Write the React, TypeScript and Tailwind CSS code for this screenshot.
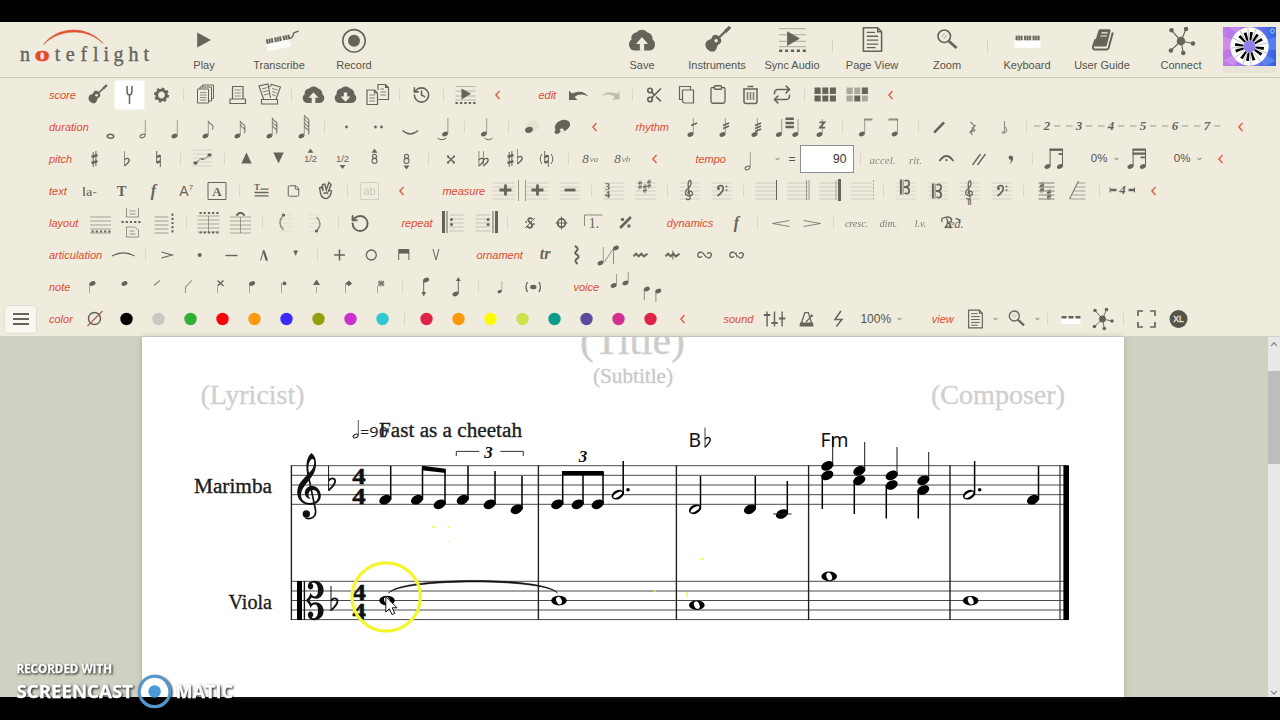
import type { ReactNode } from 'react';
import { Clipboard, History, Repeat, RotateCcw, Scissors, StickyNote } from 'lucide-react';

const INK = '#66645a';
const PAPER = '#efecde';

/* ---------- small drawing helpers, origin is the middle of the cell ---------- */

const Head = ({ x = 0, y = 0, open = false }: { x?: number; y?: number; open?: boolean }) => (
    <ellipse
        cx={x}
        cy={y}
        rx={open ? 2.6 : 3.1}
        ry={open ? 1.6 : 2.2}
        transform={`rotate(-24 ${x} ${y})`}
        fill={open ? 'none' : INK}
        stroke={open ? INK : 'none'}
        strokeWidth="1"
    />
);

const Line = ({ d, w = 1, o = 1 }: { d: string; w?: number; o?: number }) => (
    <path d={d} fill="none" stroke={INK} strokeWidth={w} opacity={o} />
);

const Fill = ({ d, o = 1 }: { d: string; o?: number }) => <path d={d} fill={INK} opacity={o} />;

const Note = ({ x = -1, y = 9, top = -7, flags = 0, open = false }: { x?: number; y?: number; top?: number; flags?: number; open?: boolean }) => (
    <>
        <Head x={x} y={y} open={open} />
        <Line d={`M${x + 2.8} ${y - 1}V${top}`} o={0.6} />
        {[...Array(flags)].map((_, i) => (
            <Line key={i} d={`M${x + 2.8} ${top + i * 3.6}q1 3 3.6 3.6q2 2 .4 5`} o={0.75} w={1.2} />
        ))}
    </>
);

const Staff = ({ x1 = -10, x2 = 10, y = -8, o = 0.3 }: { x1?: number; x2?: number; y?: number; o?: number }) => (
    <>
        {[0, 4, 8, 12, 16].map((d) => (
            <Line key={d} d={`M${x1} ${y + d}H${x2}`} o={o} />
        ))}
    </>
);

const Txt = ({ children, x = 0, y = 4, size = 11, serif = false, bold = false, italic = false, o = 1 }: {
    children: ReactNode; x?: number; y?: number; size?: number; serif?: boolean; bold?: boolean; italic?: boolean; o?: number;
}) => (
    <text
        x={x}
        y={y}
        fontSize={size}
        textAnchor="middle"
        fill={INK}
        opacity={o}
        fontWeight={bold ? 700 : 400}
        fontStyle={italic ? 'italic' : 'normal'}
        fontFamily={serif ? '"Liberation Serif", serif' : '"Liberation Sans", sans-serif'}
    >
        {children}
    </text>
);

const Sharp = ({ x = 0, y = 0 }: { x?: number; y?: number }) => (
    <g transform={`translate(${x} ${y})`}>
        <Line d="M-1.3 -7V8M1.4 -8V7" />
        <Line d="M-3 -2.2L3 -4M-3 4L3 2.2" w={2.4} />
    </g>
);

const Flat = ({ x = 0, y = 0 }: { x?: number; y?: number }) => (
    <g transform={`translate(${x} ${y})`}>
        <Line d="M-2 -8V7" o={0.7} />
        <Line d="M-2 1C0 -1.5 3 -1 2.6 1.6C2.4 3.6 0 5 -2 7" w={1.4} />
    </g>
);

const Natural = ({ x = 0 }: { x?: number }) => (
    <g transform={`translate(${x} 0)`}>
        <Line d="M-1.8 -8V4M1.8 -4V8" />
        <Line d="M-1.8 -2L1.8 -3.4M-1.8 3.6L1.8 2.2" w={2.3} />
    </g>
);

const Cloud = ({ down = false }: { down?: boolean }) => (
    <>
        <Fill d="M-6.6 8A4.9 4.9 0 0 1 -8.8 -.8A4.8 4.8 0 0 1 -4.4 -6.6A5.6 5 0 0 1 4.6 -6.4A5 5 0 0 1 8.8 -.8A4.9 4.9 0 0 1 6.6 8Z" />
        <path d={down ? 'M-1.7 -2.5H1.7V1.5H5L0 6.8L-5 1.5H-1.7Z' : 'M-1.8 8.2V2.8H-5L0 -2.8L5 2.8H1.8V8.2Z'} fill={PAPER} />
    </>
);

const Guitar = () => (
    <>
        <Fill d="M-8.6 1.5C-7.6 -1 -4.8 0 -4 -2.4C-3.4 -5 .4 -4.6 1.6 -2.4C3.4 -.8 3.2 2 1 2.8C-.8 3.6 .2 6 -2 7.8C-4.6 9.8 -10.6 5.6 -8.6 1.5Z" />
        <Line d="M0 -1L6.4 -7.2" w={1.7} />
        <Line d="M5.6 -6.4L9.4 -10" w={2.4} />
        <circle cx="-1" cy=".2" r="1.3" fill={PAPER} />
    </>
);

const Doc = ({ s = 1 }: { s?: number }) => (
    <g transform={`scale(${s})`}>
        <Line d="M-7 -9H4L7 -6V9H-7ZM4 -9V-6H7" w={1.2} />
        <Line d="M-4.4 -5.5H2M-4.4 -2.5H4.4M-4.4 .5H4.4M-4.4 3.5H4.4M-4.4 6.3H2.4" />
    </g>
);

const Magnifier = () => (
    <>
        <circle cx="-2.2" cy="-3" r="5" fill="none" stroke={INK} strokeWidth="1.3" />
        <Line d="M-4.5 -2.5L-1.8 -5.5M-2.5 -1L0 -4" w={0.7} o={0.6} />
        <Line d="M1.4 .8L7.6 6.4" w={2.2} />
    </>
);

const Sync = () => (
    <>
        <Line d="M-10 -8.5H10M-10 -4H10M-10 1H10M-10 5H10" o={0.4} />
        <Fill d="M-4 -6.6L5.5 -1.2L-4 4.4Z" />
        <path d="M-10 8H10" stroke={INK} strokeWidth="2" strokeDasharray="2.4 2" />
    </>
);

const Network = () => (
    <>
        <Line d="M0 0L-7.5 -8.5M0 0L4 -9.5M0 0L9.5 2M0 0L1.8 9.5M0 0L-8 7.5" w={0.9} />
        <circle r="3.4" fill={INK} />
        {[[-7.5, -8.5], [4, -9.5], [9.5, 2], [1.8, 9.5], [-8, 7.5]].map(([x, y]) => (
            <circle key={x} cx={x} cy={y} r="1.8" fill={INK} />
        ))}
    </>
);

const Treble = () => (
    <Line d="M-3.5 7.6Q-.2 10 .6 7L-1.4 -6Q-1.4 -10.6 1 -10.6Q3 -7 -1 -3Q-5 .4 -3.8 3.2Q-.8 6.6 3 3.6Q3.6 .2 .2 .2Q-2.4 .6 -1.2 3" w={1.3} />
);

const AltoClef = ({ y = 0 }: { y?: number }) => (
    <g transform={`translate(0 ${y})`}>
        <Line d="M-4.6 -7.5V7.5" w={2} />
        <Line d="M-2.4 -7.5V7.5" w={0.8} />
        <Line d="M-1 -6Q4 -8 3.6 -3Q3 0 -1.5 0Q3 0 3.6 3Q4 8 -1 6" w={1.8} />
    </g>
);

const BassClef = () => (
    <>
        <Line d="M-4 -3.4Q-2.6 -6.4 .6 -5.2Q4.4 -1 -4 5" w={1.6} />
        <circle cx="-3" cy="-2.6" r="1.5" fill={INK} />
        <circle cx="5" cy="-4.6" r=".9" fill={INK} />
        <circle cx="5" cy="-.8" r=".9" fill={INK} />
    </>
);

const Rhythm = ({ n }: { n: number }) => (
    <>
        <Note x={-2} y={7.4} top={-9} />
        {[...Array(n)].map((_, i) => (
            <Line key={i} d={`M-1.5 ${-1.5 + i * 3}L4.6 ${-4 + i * 3}`} w={1.4} />
        ))}
    </>
);

const Mordent = () => <Line d="M-7 1.4L-4.4 -1.4L-1.8 1.4L.8 -1.4L3.4 1.4L7 -1.2" w={2} />;

const Turn = () => <Line d="M-2.6 1.2C-5 3.6 -7.4 2 -6.6 -.6C-5.6 -4.6 -1.8 -3 0 0C1.8 3 5.6 4.6 6.6 .6C7.4 -2 5 -3.6 2.6 -1.2" w={1.4} />;

const Down = ({ children }: { children: ReactNode }) => (
    <>
        <Line d="M-3 -4V6" o={0.55} />
        {children}
    </>
);

const Tuplet = ({ n }: { n: number }) => (
    <>
        <Line d="M-14.5 -1H-8M5.5 -1H12" o={0.6} />
        <Txt serif bold italic x={-1.6} y={3} size={13}>{n}</Txt>
    </>
);

const Dot = ({ fill }: { fill: string }) => <circle r="6.2" fill={fill} />;

const Octave = ({ down = false }: { down?: boolean }) => (
    <>
        <circle cy="-2.6" r="2" fill="none" stroke={INK} strokeWidth="1.1" />
        <circle cy="1.9" r="2.5" fill="none" stroke={INK} strokeWidth="1.1" />
        <Fill d={down ? 'M-3 6.5H3L0 10.5Z' : 'M-3 -6.2H3L0 -10.2Z'} />
    </>
);

/* ---------- toolbar icons ---------- */

const icons: Record<string, ReactNode> = {
    '<': <path d="M2 -4L-1.6 0L2 4" fill="none" stroke="#e8604c" strokeWidth="1.5" />,
    guitar: <Guitar />,
    fork: (
        <>
            <rect x="-15" y="-14.5" width="30" height="29" rx="3" fill="#fff" />
            <Line d="M-2.4 -9V-3.4Q-2.4 0 0 0Q2.4 0 2.4 -3.4V-9M0 0V9" w={1.5} />
        </>
    ),
    gear: (
        <>
            <circle r="4.8" fill="none" stroke={INK} strokeWidth="2.8" />
            <circle r="6.6" fill="none" stroke={INK} strokeWidth="1.9" strokeDasharray="2.7 2.48" />
        </>
    ),
    pages: (
        <>
            <Line d="M-8 -6H3V8H-8ZM-5.5 -6V-8H6V6H3M-3 -8V-10H8V3.5H6" />
            <Line d="M-5.5 -2.5H1M-5.5 0H1M-5.5 2.5H1M-5.5 5H1" o={0.7} />
        </>
    ),
    print: (
        <>
            <Line d="M-5 4V-8.5H5.5V4M-7.5 4H8V8.5H-7.5Z" w={1.2} />
            <Line d="M-3 -5H3.4M-3 -2H3.4M-3 1H3.4" o={0.7} />
        </>
    ),
    printAll: (
        <>
            <Line d="M-8 4.5H8V9H-8ZM-6 4L-10.5 -9L-1.5 -11L1 3M0 -8L2 -10.5L11 -8L6.5 4" w={1.1} />
            <Line d="M-7.5 -6L-2 -7.5M-6.8 -3L-1 -4.5M-5.6 0L0 -1.5M2.5 -6.5L8 -5M2.5 -3.5L7 -2M2.5 -.5L6 .8" o={0.8} />
        </>
    ),
    cloudUp: <Cloud />,
    cloudDown: <Cloud down />,
    duplicate: (
        <>
            <Line d="M-10.5 -5H-3L0 -2V9.5H-10.5ZM-3 -5V-2H0M1 4.5H11V-7.5L8 -10.5H.5V-5M8 -10.5V-7.5H11" w={1.2} />
            <Line d="M-8 0H-2.5M-8 3H-2.5M-8 6H-2.5M3 -6H6.5M3 -3H8.5M3 0H8.5" o={0.8} />
        </>
    ),
    history: <History x={-9.5} y={-9.5} width={19} height={19} color={INK} strokeWidth={2} />,
    sync: <Sync />,
    undo: <Fill d="M-9.5 -4.5V5H-1L-4 2Q2 -2.6 10 1.5Q4 -6 -6.5 -1.6Z" />,
    redo: <Fill d="M9 -3.8V4.4H1.6L4.4 2Q-2 -2.6 -9 1.5Q-4 -5.4 6.5 -1.2Z" o={0.35} />,
    cut: <Scissors x={-9} y={-9} width={18} height={18} color={INK} strokeWidth={2.3} />,
    copy: <Line d="M-4 -5H7V8H-1.5Q-4 8 -4 5.5ZM-4 4.5H-7V-8.5H4V-5" w={1.2} />,
    paste: <Clipboard x={-11} y={-11} width={21} height={21} color={INK} strokeWidth={1.5} />,
    trash: (
        <>
            <Line d="M-7.5 -6H7.5M-3 -8.5H3M-6.5 -6V6.5Q-6.5 8.5 -4.5 8.5H4.5Q6.5 8.5 6.5 6.5V-6" w={1.5} />
            <Line d="M-3 -3V5M0 -3V5M3 -3V5" w={1.6} o={0.8} />
        </>
    ),
    loop: (
        <>
            <Repeat x={-11} y={-10.5} width={21} height={20} color={INK} strokeWidth={1.9} />
        </>
    ),
    grid: <Fill d="M-12 -7.5H-5.8V-1H-12ZM-4.2 -7.5H1.8V-1H-4.2ZM3.4 -7.5H9.4V-1H3.4ZM-12 .5H-5.8V6.5H-12ZM-4.2 .5H1.8V6.5H-4.2ZM3.4 .5H9.4V6.5H3.4Z" />,
    grid2: (
        <>
            <Fill d="M-12 -7.5H-5.8V-1H-12ZM-4.2 -7.5H1.8V-1H-4.2ZM-12 .5H-5.8V6.5H-12ZM3.4 .5H9.4V6.5H3.4Z" o={0.5} />
            <Fill d="M3.4 -7.5H9.4V-1H3.4ZM-4.2 .5H1.8V6.5H-4.2Z" />
        </>
    ),

    whole: <ellipse cy="9.3" rx="3.2" ry="2" fill="none" stroke={INK} strokeWidth="1.5" />,
    half: <Note x={0} open />,
    quarter: <Note x={0} />,
    eighth: <Note x={-1} top={-6} flags={1} />,
    n16: <Note x={-1} top={-6} flags={2} />,
    n32: <Note x={-1} top={-9} flags={3} />,
    n64: <Note x={-1} top={-12} flags={4} />,
    dot: <circle cx="0" r="1.4" fill={INK} />,
    dots: (
        <>
            <circle cx="-3" r="1.4" fill={INK} />
            <circle cx="3" r="1.4" fill={INK} />
        </>
    ),
    smile: <Line d="M-8 3.5Q0 10.5 7.5 3.5" w={1.3} />,
    tieL: (
        <>
            <Note x={2.6} y={7} top={-9} />
            <Line d="M-5 11Q-1 14.5 4 11" />
        </>
    ),
    tieR: (
        <>
            <Note x={-2.6} y={7} top={-9} />
            <Line d="M-2 11Q2 14.5 6 11" />
        </>
    ),
    fade: (
        <>
            <ellipse cx="2" cy="-1" rx="6.5" ry="5.5" fill={INK} opacity=".07" />
            <ellipse cx="-2.2" cy="2.4" rx="4" ry="2.9" transform="rotate(-15)" fill={INK} />
        </>
    ),
    bigHead: (
        <>
            <ellipse cx=".4" cy="-1" rx="8" ry="5.6" transform="rotate(-24)" fill={INK} />
            <ellipse cx="-3" cy="3" rx="3" ry="2.1" transform="rotate(-24)" fill={PAPER} />
            <Head x={-5} y={4.6} />
        </>
    ),
    r1: <Rhythm n={1} />,
    r2: <Rhythm n={2} />,
    r3: <Rhythm n={3} />,
    rBeam: (
        <>
            <Note x={-9.6} y={7.4} top={-8} />
            <Note x={6.8} y={7.4} top={-8} />
            <Line d="M-3 -8.3H5.4M-3 -4H5.4M-3 0H5.4" w={2.4} />
        </>
    ),
    rZ: (
        <>
            <Note x={-1} y={7.4} top={-8} />
            <Line d="M-1 -4.6H4L-.6 .6H4.6" w={1.7} />
        </>
    ),
    beamR: (
        <>
            <Note x={-2.6} y={7} top={-8} />
            <Line d="M0 -7.5H8" w={2} o={0.7} />
        </>
    ),
    beamL: (
        <>
            <Note x={-1.8} y={7} top={-8} />
            <Line d="M1.4 -7.5H-8" w={2} o={0.7} />
        </>
    ),
    slash: <Line d="M-6.4 5.6L3.6 -4.6" w={2.6} />,
    rest: <Line d="M-2 -5Q4 0 0 1Q4 4 1 4Q-3 4 0 8M3 -2L-3 6" w={1.3} o={0.75} />,
    grace: <Line d="M0 -6V6Q4 5 1 0M0 6Q-4 7 -1 4" w={1.1} o={0.7} />,
    t2: <Tuplet n={2} />,
    t3: <Tuplet n={3} />,
    t4: <Tuplet n={4} />,
    t5: <Tuplet n={5} />,
    t6: <Tuplet n={6} />,
    t7: <Tuplet n={7} />,

    sharp: <Sharp />,
    flat: <Flat />,
    natural: <Natural />,
    contour: (
        <>
            <Staff y={-9} o={0.18} />
            <Line d="M-7 4L-2 0H2L7 -4" w={0.8} />
            <ellipse cx="-7" cy="4" rx="2.2" ry="1.7" fill={INK} />
            <circle cx="0" cy="0" r="1.1" fill={INK} />
            <ellipse cx="7" cy="-4" rx="2.2" ry="1.7" fill={INK} />
        </>
    ),
    up: <Fill d="M0 -6.4L5.2 4.4H-5.2Z" />,
    down: <Fill d="M0 4.4L5.2 -6.4H-5.2Z" />,
    halfUp: (
        <>
            <Txt y={3} size={9.5}>1/2</Txt>
            <Fill d="M-3 -6.2H3L0 -10.2Z" />
        </>
    ),
    halfDown: (
        <>
            <Txt y={3} size={9.5}>1/2</Txt>
            <Fill d="M-3 6H3L0 10Z" />
        </>
    ),
    octUp: <Octave />,
    octDown: <Octave down />,
    dblSharp: (
        <>
            <Line d="M-3 -3L4 4M4 -3L-3 4" w={1.4} />
            <path d="M-3.4 -3.4h2v2h-2zM2.4 -3.4h2v2h-2zM-3.4 2.4h2v2h-2zM2.4 2.4h2v2h-2z" fill={INK} />
        </>
    ),
    dblFlat: (
        <>
            <Flat x={-1.6} />
            <Flat x={3} />
        </>
    ),
    sharpFlat: (
        <>
            <Sharp x={-4} />
            <Flat x={5} y={-2} />
        </>
    ),
    parNat: (
        <>
            <Natural />
            <Line d="M-4.6 -5Q-8 0 -4.6 5M4.6 -5Q8 0 4.6 5" />
        </>
    ),
    va: (
        <>
            <Txt serif italic x={-5} size={13}>8</Txt>
            <Txt serif italic x={3.4} y={2.6} size={9} o={0.8}>va</Txt>
        </>
    ),
    vb: (
        <>
            <Txt serif italic x={-5} size={13}>8</Txt>
            <Txt serif italic x={3.4} y={2.6} size={9} o={0.8}>vb</Txt>
        </>
    ),
    accel: <Txt serif italic y={5} size={11} o={0.75}>accel.</Txt>,
    rit: <Txt serif italic x={1} y={5} size={11} o={0.75}>rit.</Txt>,
    fermata: (
        <>
            <Line d="M-7 2Q0 -8 6.8 2" w={1.9} />
            <circle cx="0" cy="1.2" r="1.1" fill={INK} />
        </>
    ),
    caesura: <Line d="M-6 6L2 -5M-1 6L7 -5" w={1.3} />,
    comma: <Fill d="M-2 -1.6A2.3 2.3 0 1 1 2.6 -.4Q2.4 3.6 -1.4 5Q1.2 2.4 .6 .8Q-2 1 -2 -1.6Z" />,
    swing8: (
        <>
            <Head x={-7} y={7.4} />
            <Head x={5.4} y={7.4} />
            <Line d="M-4.4 7V-9.5M8 7V-9.5" />
            <Line d="M-5 -9.3H8.5" w={2.4} />
            <Line d="M4 -5H8.5" w={1.8} />
        </>
    ),
    swing16: (
        <>
            <Head x={-7} y={7.4} />
            <Head x={5.4} y={7.4} />
            <Line d="M-4.4 7V-9.5M8 7V-9.5" />
            <Line d="M-5 -9.3H8.5M-5 -5.4H8.5" w={2.2} />
            <Line d="M3 -1.6H8.5" w={1.8} />
        </>
    ),

    lyric: <Txt serif bold y={4.5} size={13} o={0.8}>la-</Txt>,
    bigT: <Txt serif bold y={4.5} size={14.5}>T</Txt>,
    forte: <Txt serif bold italic y={4.5} size={16}>f</Txt>,
    chord: (
        <>
            <Txt x={-1.6} y={5} size={14}>A</Txt>
            <Txt x={5.4} y={-1} size={8}>7</Txt>
        </>
    ),
    rehearsal: (
        <>
            <Line d="M-9.5 -8.5H8.5V8.5H-9.5Z" />
            <Txt serif bold x={-.5} y={4.8} size={13}>A</Txt>
        </>
    ),
    textLines: (
        <>
            <Txt serif bold x={-4.6} y={-1} size={9}>T</Txt>
            <Line d="M-1 -1.8H7M-7 1.5H7M-7 4.8H7" w={1.3} />
        </>
    ),
    sticky: <StickyNote x={-7} y={-7} width={14} height={14} color={INK} strokeWidth={1.7} />,
    hand: <Line d="M-5 2L-6 -3L-4 -4L-2.4 0L-3 -6.4L-.6 -7L.8 -1L3.4 -8.4L5.6 -6.4L3 0Q7 -2 5.6 2Q4 7.6 0 7.6Q-4 7 -5 2ZM-2 2.6Q1 .6 2.6 3" w={1.4} />,
    ab: (
        <>
            <Line d="M-9 -8.5H9V8.5H-9Z" o={0.2} />
            <Txt y={4} size={11} o={0.28}>ab</Txt>
        </>
    ),
    addBefore: (
        <>
            <Staff x1={-13} x2={9} o={0.2} />
            <Line d="M-6 -1H6M0 -6.5V4.5" w={2.8} />
            <Line d="M13 -11V10" o={0.6} />
        </>
    ),
    addAfter: (
        <>
            <Staff x1={-11} x2={11} o={0.2} />
            <Line d="M-6 -1H6M0 -6.5V4.5" w={2.8} />
            <Line d="M-12 -11V10" o={0.6} />
        </>
    ),
    minus: (
        <>
            <Staff o={0.2} />
            <Line d="M-5 -1H6" w={2.8} />
        </>
    ),
    timeSig: (
        <>
            <Staff o={0.22} />
            <Txt serif bold x={-6} y={-1} size={10}>3</Txt>
            <Txt serif bold x={-6} y={7} size={10}>4</Txt>
        </>
    ),
    keySig: (
        <>
            <Staff o={0.22} />
            <g transform="scale(.6)">
                <Sharp x={-9} y={-10} />
                <Sharp x={-1} y={-4} />
                <Sharp x={6} y={-12} />
            </g>
        </>
    ),
    treble: (
        <>
            <Staff o={0.2} />
            <Treble />
        </>
    ),
    bass: (
        <>
            <Staff o={0.2} />
            <BassClef />
        </>
    ),
    bar1: (
        <>
            <Staff x1={-10} x2={11} o={0.25} />
            <Line d="M11 -11V9" />
        </>
    ),
    bar2: (
        <>
            <Staff x1={-10} x2={11} o={0.25} />
            <Line d="M9 -11V9M11.6 -11V9" o={0.6} />
        </>
    ),
    bar3: (
        <>
            <Staff x1={-10} x2={11} o={0.25} />
            <Line d="M6.5 -11V9" o={0.5} />
            <Line d="M10 -12V10" w={3} />
        </>
    ),
    bar4: (
        <>
            <Staff x1={-10} x2={11} o={0.22} />
            <path d="M12 -11V9" stroke={INK} strokeDasharray="2 1.5" opacity=".5" />
        </>
    ),
    alto: (
        <>
            <Staff o={0.15} />
            <AltoClef y={-4} />
        </>
    ),
    tenor: (
        <>
            <Staff o={0.15} />
            <AltoClef />
        </>
    ),
    treble8: (
        <>
            <Staff o={0.2} />
            <g transform="scale(.95)"><Treble /></g>
            <Txt serif bold y={13.5} size={8}>8</Txt>
        </>
    ),
    percussion: (
        <>
            <Staff o={0.2} />
            <BassClef />
        </>
    ),
    transpose: (
        <>
            <Staff x1={-7} x2={9} o={0.8} />
            <g transform="scale(.7)">
                <Sharp x={-5} y={-5} />
                <Sharp x={5} y={5} />
            </g>
        </>
    ),
    slashStaff: (
        <>
            <Line d="M0 -8H8M-1.6 -4H8M-3.6 0H8M-5.4 4H8M-7.4 8H8" o={0.55} />
            <Line d="M-8 8L1 -10" />
        </>
    ),
    multiRest: (
        <>
            <Line d="M-11 -1H-5M7 -1H13" w={2.6} />
            <Line d="M-11.5 -3.5V1.5M13 -3.5V1.5" />
            <Txt serif bold italic x={1} y={3.4} size={13}>4</Txt>
        </>
    ),

    sysBreak: (
        <>
            <Staff x1={-10.5} x2={10.5} y={-6} o={0.55} />
            <path d="M-9 8.5H10" stroke={INK} strokeWidth="2" strokeDasharray="2.2 2" />
        </>
    ),
    pageBreak: (
        <>
            <path d="M-11 -1H9" stroke={INK} strokeWidth="1.8" strokeDasharray="2.2 2" />
            <Line d="M-6 -15V-6H6V-15M-3 -12H3M-3 -9H3M-6 14V4H2L6 7V14ZM-3 8H2M-3 11H3" o={0.65} />
        </>
    ),
    marginBreak: (
        <>
            <Staff x1={-10} x2={4} y={-6} o={0.6} />
            <path d="M8 -9.5V10" stroke={INK} strokeWidth="2" strokeDasharray="2.2 2" />
        </>
    ),
    keep: (
        <>
            <Staff x1={-11} x2={11} y={-7} o={0.5} />
            <path d="M-9 -10H11M-9 9.5H11" stroke={INK} strokeWidth="2" strokeDasharray="2.2 2" />
            <Line d="M0 -7V9" o={0.6} />
        </>
    ),
    lock: (
        <>
            <Staff x1={-10.5} x2={10.5} y={-6} o={0.5} />
            <Line d="M-4 -7.4Q0 -13 4 -7.4" w={2} />
            <Line d="M0 -6V10" o={0.6} />
        </>
    ),
    slurL: (
        <>
            <Staff x1={-6} x2={8} o={0.1} />
            <Line d="M-1 -8Q-8 0 -1 7" w={1.4} o={0.7} />
            <circle cx="-1" cy="-8" r="1.6" fill={INK} />
        </>
    ),
    slurR: (
        <>
            <Staff x1={-8} x2={4} o={0.1} />
            <Line d="M0 -6Q7 1 0 8" w={1.4} o={0.7} />
            <circle cx="0" cy="8" r="1.6" fill={INK} />
        </>
    ),
    reset: <RotateCcw x={-10.4} y={-9.5} width={20} height={20} color={INK} strokeWidth={2.3} />,
    repStart: (
        <>
            <Staff x1={-4} x2={10} o={0.3} />
            <Line d="M-10 -12V10" w={3} />
            <Line d="M-6.5 -12V10" />
            <circle cx="-2" cy="-3.4" r="1.5" fill={INK} />
            <circle cx="-2" cy="1.4" r="1.5" fill={INK} />
        </>
    ),
    repEnd: (
        <>
            <Staff x1={-10} x2={5} o={0.3} />
            <Line d="M11 -12V10" w={3} />
            <Line d="M7.5 -12V10" />
            <circle cx="2.6" cy="-3.4" r="1.5" fill={INK} />
            <circle cx="2.6" cy="1.4" r="1.5" fill={INK} />
        </>
    ),
    segno: (
        <>
            <Line d="M3 -4Q0 -6 -1.4 -3.4Q-1 -1 1.4 0Q3.6 2 2 4.2Q0 5.6 -2.4 3.6" w={1.9} />
            <Line d="M-4.4 5L5.4 -5" />
            <circle cx="-3.4" cy="-1" r=".9" fill={INK} />
            <circle cx="4.4" cy="1" r=".9" fill={INK} />
        </>
    ),
    coda: (
        <>
            <ellipse cx="0" cy="0" rx="3.8" ry="4.2" fill="none" stroke={INK} strokeWidth="1.9" />
            <Line d="M0 -6.5V6.5M-6 0H6" />
        </>
    ),
    ending: (
        <>
            <Line d="M-9 3V-8H9" o={0.7} />
            <Txt serif x={.6} y={5} size={14}>1.</Txt>
        </>
    ),
    simile: (
        <>
            <Line d="M-5.4 5L5.4 -6" w={2.6} />
            <circle cx="-3" cy="-3.6" r="1.7" fill={INK} />
            <circle cx="3.4" cy="3" r="1.7" fill={INK} />
        </>
    ),
    cresc: <Line d="M9 -2.5L-8 .5L9 3.5" o={0.75} />,
    decresc: <Line d="M-9 -2.5L8 .5L-9 3.5" o={0.75} />,
    crescT: <Txt serif italic size={10} o={0.85}>cresc.</Txt>,
    dimT: <Txt serif italic size={10} o={0.85}>dim.</Txt>,
    lvT: <Txt serif italic size={10} o={0.85}>l.v.</Txt>,
    ped: (
        <>
            <Line d="M-10.4 -1Q-12 -5 -8 -5.4Q-3 -7 -1 -4Q-.4 -.6 -4.4 -.4Q-2.4 1.6 -1 5M-6 -4.6Q-3 0 -7.6 4.8Q-5 3 -2 5" w={1.4} />
            <Txt serif italic x={3.6} y={5.2} size={12.5}>ed.</Txt>
            <Line d="M3 -4.4Q7 -4.6 7.4 0" w={1.4} />
        </>
    ),

    slur: <Line d="M-11.5 1Q0 -5.4 11 1" w={1.3} />,
    accent: <Line d="M-6 -3L4.6 0L-6 3" w={1.2} />,
    stacc: <circle cx=".2" r="2" fill={INK} />,
    tenuto: <Line d="M-6 .5H6" w={1.4} />,
    marcato: (
        <>
            <Line d="M-3 5.6L.2 -5L3.4 5.6" />
            <Line d="M.2 -4L3.4 5.6" w={2.2} />
        </>
    ),
    wedge: <Fill d="M-2.2 -4.4H2.4L.2 1Z" />,
    plus: <Line d="M-5.4 0H5.4M0 -5.4V5.4" w={1.6} />,
    openO: <circle cx="-.2" r="5" fill="none" stroke={INK} strokeWidth="1.3" />,
    downBow: (
        <>
            <Fill d="M-5.2 -6H5.8V-1.4H-5.2Z" />
            <Line d="M-4.8 -2V5M5.4 -2V5" />
        </>
    ),
    upBow: <Line d="M-2.6 -6L.6 5L3.4 -6" />,
    trill: <Txt serif bold italic x={0.6} y={4.4} size={16}>tr</Txt>,
    arp: <Line d="M-1.6 -9Q3 -6.6 0 -4Q-3 -1.6 1 0Q3.4 2.4 0 4Q-2.4 6 1 9" w={2} />,
    gliss: (
        <>
            <Note x={-8} y={8} top={-8} />
            <Line d="M-4 7L4.5 -6M5 -6.6V9" o={0.7} />
            <Head x={7.4} y={-7} />
        </>
    ),
    mordent: <Mordent />,
    lowMordent: (
        <>
            <Mordent />
            <Line d="M.4 -4.4V4.4" />
        </>
    ),
    turn: <Turn />,
    invTurn: (
        <>
            <Turn />
            <Line d="M0 -3V3" o={0.4} />
        </>
    ),

    h1: <Down><Head x={0} y={-3.6} /></Down>,
    h2: <Head x={0} y={-3.6} />,
    h3: <Line d="M-2.6 -1.4L3.4 -6.6" w={1.3} o={0.7} />,
    h4: <Line d="M-3 6V0L3.4 -6.6" w={1.2} o={0.6} />,
    h5: (
        <>
            <Line d="M-3 0V6" o={0.55} />
            <Line d="M-3 -6.6L3 -1M3 -6.6L-3 -1" w={1.4} />
        </>
    ),
    h6: <Down><Head x={-.4} y={-3.6} /></Down>,
    h7: <Down><circle cx="0" cy="-3.6" r="1.9" fill={INK} /></Down>,
    h8: (
        <>
            <Line d="M0 0V6" o={0.55} />
            <Fill d="M0 -7.6L3.6 -2H-3.6Z" />
        </>
    ),
    h9: <Down><Fill d="M-3 -3.6L.4 -6.6L3.6 -3.6L.4 -.8Z" /></Down>,
    h10: (
        <>
            <Line d="M-3 -1V6" o={0.55} />
            <circle cx=".6" cy="-3.6" r="3.2" fill={INK} opacity=".45" />
            <Line d="M-2 -5.6L3.4 -1.6M3.4 -5.6L-2 -1.6" w={1.1} />
        </>
    ),
    stemDown: (
        <>
            <Head x={1.6} y={-7} />
            <Line d="M-.8 -7V7" />
            <Fill d="M-3 5H1.6L-.8 9.4Z" />
        </>
    ),
    stemUp: (
        <>
            <Head x={-1} y={7} />
            <Line d="M1.8 7V-7" />
            <Fill d="M-.6 -6H4.2L1.8 -10Z" />
        </>
    ),
    cue: <g transform="scale(.75)"><Note x={-1} y={6} top={-8} /></g>,
    parHead: (
        <>
            <ellipse cx=".8" cy="0" rx="3.2" ry="2.3" fill={INK} />
            <Line d="M-5 -5Q-8 0 -5 5M6.4 -5Q9.4 0 6.4 5" w={1.3} />
        </>
    ),
    voice1: (
        <>
            <Note x={-6.8} y={-1.6} top={-13} />
            <Note x={5} y={-4} top={-15} />
        </>
    ),
    voice2: (
        <>
            <Head x={-5.6} y={2} />
            <Head x={5.8} y={4} />
            <Line d="M-8.2 2V13M3.4 4V15" o={0.7} />
        </>
    ),

    noColor: (
        <>
            <circle cy="-.5" r="6" fill="none" stroke={INK} strokeWidth="1.5" />
            <path d="M-7 7L8 -8" stroke="#a8605a" strokeWidth="1.2" />
        </>
    ),
    black: <Dot fill="#000" />,
    silver: <Dot fill="#c8c8c4" />,
    green: <Dot fill="#2eb135" />,
    red: <Dot fill="#fb0207" />,
    orange: <Dot fill="#fd9a12" />,
    blue: <Dot fill="#3a2bfb" />,
    olive: <Dot fill="#92a00c" />,
    magenta: <Dot fill="#cc2fd0" />,
    cyan: <Dot fill="#31c7d0" />,
    crimson: <Dot fill="#dd2449" />,
    amber: <Dot fill="#fb990a" />,
    yellow: <Dot fill="#fdfb03" />,
    lime: <Dot fill="#cfe04e" />,
    teal: <Dot fill="#0e9b8c" />,
    violet: <Dot fill="#5d4a9c" />,
    pink: <Dot fill="#d1318f" />,
    mixer: (
        <>
            <Line d="M-7.4 -7.5V7.5M0 -7.5V7.5M7.6 -7.5V7.5" w={1.4} />
            <Line d="M-10.6 -4H-4.2M-3.2 4H3.2M4.4 -.4H10.8" w={2} />
        </>
    ),
    metronome: (
        <>
            <Line d="M-5.4 5L-1.6 -6.4H1.8L5.4 5Z" w={1.3} />
            <Line d="M-.5 3L5.6 -3.6" w={1.2} />
            <circle cx="5.2" cy="-3.2" r="1.3" fill={INK} />
            <Fill d="M-6.4 3.4H6.4L7 7.4H-7Z" />
        </>
    ),
    bolt: <Line d="M2.4 -8L-3.6 .6H3.4L-2.2 7.4" w={1.5} />,
    doc: <Doc s={0.98} />,
    zoom: <Magnifier />,
    keys: (
        <>
            <rect x="-9" y="-1" width="19" height="6" fill="#fff" />
            <path d="M-9 -1.8H10" stroke={INK} strokeWidth="2.6" strokeDasharray="5 2" />
        </>
    ),
    network: <Network />,
    full: <Line d="M-8.5 -3V-8H-3.5M3.5 -8H8.5V-3M8.5 3V8H3.5M-3.5 8H-8.5V3" w={1.7} />,
    xl: (
        <>
            <circle r="9" fill="#55534a" />
            <text x="0" y="3" textAnchor="middle" fontSize="8.6" fill={PAPER} stroke={PAPER} strokeWidth=".3" fontFamily='"Liberation Sans", sans-serif'>XL</text>
        </>
    ),
};

/* ---------- toolbar rows ---------- */

type Group = { label: string; width: string; items: string };

const rows: Group[][] = [
    [
        { label: 'score', width: 'w-[32px]', items: 'guitar fork gear | pages print printAll | cloudUp cloudDown duplicate | history | sync <' },
        { label: 'edit', width: 'w-[24px]', items: 'undo redo | cut copy paste trash loop | grid grid2 <' },
    ],
    [
        { label: 'duration', width: 'w-[45px]', items: 'whole half quarter eighth n16 n32 n64 | dot dots smile tieL | tieR | fade bigHead <' },
        { label: 'rhythm', width: 'w-[41px]', items: 'r1 r2 r3 rBeam rZ | beamR beamL | slash rest grace | t2 t3 t4 t5 t6 t7 <' },
    ],
    [
        { label: 'pitch', width: 'w-[29px]', items: 'sharp flat natural | contour | up down halfUp halfDown octUp octDown | dblSharp dblFlat sharpFlat parNat | va vb <' },
        { label: 'tempo', width: 'w-[36px]', items: 'half #tempo | accel rit fermata caesura comma | swing8 #swing swing16 #swing <' },
    ],
    [
        { label: 'text', width: 'w-[24px]', items: 'lyric bigT forte chord rehearsal | textLines sticky hand | ab <' },
        { label: 'measure', width: 'w-[47px]', items: 'addBefore addAfter minus | timeSig keySig | treble bass | bar1 bar2 bar3 bar4 | alto tenor treble8 percussion | transpose slashStaff | multiRest <' },
    ],
    [
        { label: 'layout', width: 'w-[35px]', items: 'sysBreak pageBreak marginBreak | keep lock | slurL slurR | reset' },
        { label: 'repeat', width: 'w-[36px]', items: 'repStart repEnd | segno coda ending simile' },
        { label: 'dynamics', width: 'w-[53px]', items: 'forte | cresc decresc | crescT dimT lvT ped' },
    ],
    [
        { label: 'articulation', width: 'w-[58px]', items: 'slur | accent stacc tenuto marcato wedge | plus openO downBow upBow' },
        { label: 'ornament', width: 'w-[52px]', items: 'trill arp gliss mordent lowMordent turn invTurn' },
    ],
    [
        { label: 'note', width: 'w-[27px]', items: 'h1 h2 h3 h4 h5 h6 h7 h8 h9 h10 | stemDown stemUp | cue parHead' },
        { label: 'voice', width: 'w-[31px]', items: 'voice1 voice2' },
    ],
    [
        { label: 'color', width: 'w-[29px]', items: 'noColor black silver green red orange blue olive magenta cyan | crimson amber yellow lime teal violet pink crimson <' },
        { label: 'sound', width: 'w-[35px]', items: 'mixer metronome bolt #volume' },
        { label: 'view', width: 'w-[27px]', items: 'doc #caret zoom #caret | keys network | full xl' },
    ],
];

function Caret() {
    return (
        <svg width="5" height="4" viewBox="0 0 6 4" className="shrink-0">
            <path d="M.8 .8L3 2.8L5.2 .8" fill="none" stroke={INK} strokeWidth="1.3" opacity=".6" />
        </svg>
    );
}

function Item({ name }: { name: string }) {
    switch (name) {
        case '|':
            return (
                <div className="flex w-3 shrink-0 justify-center">
                    <div className="h-3 w-px bg-[#dad7c8]" />
                </div>
            );
        case '#caret':
            return (
                <div className="flex w-[9.5px] shrink-0 items-center justify-center">
                    <Caret />
                </div>
            );
        case '#tempo':
            return (
                <div className="flex w-[91px] shrink-0 items-center text-[12px] text-[#55534a]">
                    <div className="flex w-[37px] items-center justify-end gap-[8px] pr-[5px]">
                        <Caret />
                        <span>=</span>
                    </div>
                    <div className="flex h-[28px] w-[54px] items-center justify-end border border-[#8b8f92] bg-white pr-[7px] text-[#333]">
                        90
                    </div>
                </div>
            );
        case '#swing':
            return (
                <div className="flex w-[51px] shrink-0 items-center justify-end gap-[7px] pr-[2px] text-[11.5px] leading-none text-[#55534a]">
                    <span>0%</span>
                    <Caret />
                </div>
            );
        case '#volume':
            return (
                <div className="flex w-[52px] shrink-0 items-center justify-between pl-[6px] pr-[4px] text-[12px] leading-none text-[#55534a]">
                    <span>100%</span>
                    <Caret />
                </div>
            );
        default:
            return (
                <svg width="32" height="32" viewBox="-16.5 -16 32 32" className="shrink-0 overflow-visible">
                    {icons[name]}
                </svg>
            );
    }
}

function Toolbar() {
    return (
        <div className="h-[259px] shrink-0 border-b border-[#d3d2ca] bg-[#efecde] pt-px">
            {rows.map((groups, i) => (
                <div key={i} className="flex h-8 items-center">
                    <div className="w-[49px] shrink-0 pl-1">
                        {i === rows.length - 1 && (
                            <div className="flex h-[29px] w-[33px] flex-col items-center justify-center gap-[3px] rounded border border-[#e2dfd2] bg-[#f8f6ee]">
                                <div className="h-0.5 w-4 bg-[#66645a]" />
                                <div className="h-0.5 w-4 bg-[#66645a]" />
                                <div className="h-0.5 w-4 bg-[#66645a]" />
                            </div>
                        )}
                    </div>
                    <div className="flex gap-[25.4px]">
                        {groups.map((g) => (
                            <div key={g.label} className="flex items-center">
                                <div className={`${g.width} shrink-0 whitespace-nowrap pt-px text-[11px] italic leading-none text-[#dd4b32]`}>
                                    {g.label}
                                </div>
                                {g.items.split(' ').map((name, k) => (
                                    <Item key={k} name={name} />
                                ))}
                            </div>
                        ))}
                    </div>
                </div>
            ))}
        </div>
    );
}

/* ---------- header ---------- */

function HeaderButton({ label, children }: { label: string; children: ReactNode }) {
    return (
        <div className="flex w-[75px] shrink-0 flex-col items-center">
            <svg width="36" height="36" viewBox="-18 -18 36 36" className="overflow-visible">
                {children}
            </svg>
            <span className="-mt-px whitespace-nowrap text-[11px] leading-4 text-[#55534a]">{label}</span>
        </div>
    );
}

function HeaderSep() {
    return (
        <div className="flex w-[5px] shrink-0 justify-center pt-[18px]">
            <div className="h-3 w-px bg-[#d5d2c3]" />
        </div>
    );
}

function KeyGroups() {
    return (
        <>
            {[-11.4, -2.9, 5.6].map((x) => (
                <g key={x}>
                    <path d={`M${x} -2H${x + 7}`} stroke={INK} strokeWidth="4.6" />
                    <path d={`M${x + 2.3} -4.5V.5M${x + 4.7} -4.5V.5`} stroke={PAPER} strokeWidth=".7" opacity=".8" />
                </g>
            ))}
        </>
    );
}

function Logo() {
    return (
        <svg width="166.5" height="55" viewBox="0 22 166.5 55" className="shrink-0">
            <path d="M43.5 44.5C58 25.4 88 25.4 103 43.5C88 28 60 28 43.5 44.5Z" fill="#e0532f" stroke="#e0532f" strokeWidth=".6" />
            <g fontSize="20" fill={INK} stroke={INK} strokeWidth=".35" fontFamily='"Liberation Serif", serif'>
                <text x="20" y="60.6">n</text>
                <text x="34.6" y="60.6" fontWeight="700" textLength="15.4" lengthAdjust="spacingAndGlyphs" fill="#e8482a" stroke="#e8482a">o</text>
                <text x="54.8 65.8 80.4 93 103.6 113.6 128.6 143.6" y="60.6">teflight</text>
            </g>
        </svg>
    );
}

function Avatar() {
    return (
        <svg width="53" height="46" viewBox="-26.5 -19.5 53 46" className="shrink-0">
            <defs>
                <linearGradient id="sky" x1="0" x2="1">
                    <stop offset="0" stopColor="#c678e6" />
                    <stop offset=".5" stopColor="#8d7cee" />
                    <stop offset="1" stopColor="#2f62e4" />
                </linearGradient>
            </defs>
            <rect x="-26.5" y="-19.5" width="53" height="46" rx="2" fill="#e8e4d8" />
            <rect x="-26.5" y="-19.5" width="53" height="39" fill="url(#sky)" />
            <path d="M-26.5 -10L0 0L-26.5 4ZM-20 -19.5L0 0L-10 -19.5ZM-26.5 14L0 0L-16 19.5Z" fill="#e0a0f4" opacity=".5" />
            <path d="M26.5 -10L0 0L26.5 4ZM26.5 14L0 0L16 19.5Z" fill="#6c9cf8" opacity=".5" />
            <circle r="19.2" fill="#fff" />
            {[8, 34, 60, 98, 124, 162, 188, 214, 252, 278, 316, 342].map((a) => (
                <path key={a} d="M-1.5 -14.5H1.5L.9 -6H-.9Z" fill="#000" transform={`rotate(${a})`} />
            ))}
            {[21, 47, 79, 111, 143, 175, 201, 233, 265, 297, 329, 355].map((a) => (
                <path key={a} d="M0 -19V-7" stroke="#8a8a8a" strokeWidth=".5" transform={`rotate(${a})`} />
            ))}
            <circle r="6" fill="#8f80ec" />
            <circle cx="23" cy="-15.5" r="2" fill="none" stroke="#b9e4ff" strokeWidth=".8" />
        </svg>
    );
}

function Header() {
    return (
        <header className="flex h-14 shrink-0 border-b border-[#cdcabd] bg-[#efecde]">
            <Logo />
            <HeaderButton label="Play">
                <Fill d="M-6.8 -7.5L7 0L-6.8 7.5Z" />
            </HeaderButton>
            <HeaderButton label="Transcribe">
                <g transform="rotate(-12)">
                    <rect x="-13.5" y="1" width="24" height="8" fill="#fff" opacity=".8" />
                    <g transform="translate(-1.4 1)"><KeyGroups /></g>
                    <Line d="M11 1L14 -.6L16 -4L21 -4.6" w={1.3} />
                </g>
            </HeaderButton>
            <HeaderButton label="Record">
                <circle cy=".8" r="11.2" fill="none" stroke={INK} strokeWidth="1.6" />
                <circle cy=".8" r="6" fill={INK} />
            </HeaderButton>
            <div className="w-[213px] shrink-0" />
            <HeaderButton label="Save">
                <g transform="translate(0 .5) scale(1.2 1.25)"><Cloud /></g>
            </HeaderButton>
            <HeaderButton label="Instruments">
                <g transform="translate(.5 .4) scale(1.35)"><Guitar /></g>
            </HeaderButton>
            <HeaderButton label="Sync Audio">
                <g transform="translate(.5 0) scale(1.34)"><Sync /></g>
            </HeaderButton>
            <HeaderSep />
            <HeaderButton label="Page View">
                <g transform="translate(.5 -.5)"><Doc s={1.3} /></g>
            </HeaderButton>
            <HeaderButton label="Zoom">
                <g transform="scale(1.25)"><Magnifier /></g>
            </HeaderButton>
            <HeaderSep />
            <HeaderButton label="Keyboard">
                <rect x="-12.4" y=".4" width="26" height="7.4" fill="#fff" />
                <KeyGroups />
            </HeaderButton>
            <HeaderButton label="User Guide">
                <Fill d="M-3.4 -9.8Q-3 -10.8 -2 -10.8H7.4Q9 -10.6 8.6 -9.2L4.8 5.6Q4.4 6.6 3.4 6.6H-8.4Z" />
                <Line d="M-6.4 -1L-9 6.4Q-9.6 9.6 -7 9.6H4.4Q6 9.6 6.6 8L10.8 -7.6" w={2} />
                <path d="M-.6 -7.2H5.8M-1.6 -4H4.8" stroke={PAPER} strokeWidth="1.2" />
            </HeaderButton>
            <div className="w-1 shrink-0" />
            <HeaderButton label="Connect">
                <g transform="translate(0 1) scale(1.26)"><Network /></g>
            </HeaderButton>
            <div className="w-1 shrink-0" />
            <div className="pt-[5px]">
                <Avatar />
            </div>
        </header>
    );
}

/* ---------- score ---------- */

const trebleLines = [465.7, 475.3, 485, 494.7, 504.3];
const altoLines = [581.3, 591, 600.5, 610, 619.6];

// [x, y, stem x, stem end, kind]
const notes: [number, number, number, number, string?][] = [
    [385.3, 499.7, 390.7, 466],
    [417, 499.7, 422.5, 467],
    [439.7, 504.3, 445, 470],
    [462.7, 499.7, 468, 466],
    [489.7, 504.3, 495, 471],
    [516.7, 509.3, 522, 476],
    [557.3, 504.3, 562.7, 472],
    [577.7, 504.3, 583, 472],
    [597.7, 504.3, 603, 472],
    [617.7, 494.7, 623.2, 461, 'half'],
    [695, 509.3, 700.5, 476, 'half'],
    [750, 509.3, 755.3, 476],
    [782, 514, 787.3, 481],
    [827.3, 465.9, 832.7, 436, 'thin'],
    [859.3, 470.7, 864.7, 442, 'thin'],
    [891.7, 475.4, 897, 447, 'thin'],
    [923.3, 480.3, 928.7, 452, 'thin'],
    [827.3, 475.4, 822.3, 509],
    [859.3, 480.3, 854.3, 514],
    [891.7, 485, 886.3, 518.5],
    [923.3, 490, 918.3, 518.5],
    [969, 494.7, 974.6, 461, 'half'],
    [1033, 499.7, 1038.5, 466],
];

const wholes = [[387, 600.6], [559, 600.6], [696.8, 605.2], [829.2, 576.4], [970.7, 600.7]];

function Words({ x, y, w, size, children, fill = '#1c1c1c' }: { x: number; y: number; w: number; size: number; children: string; fill?: string }) {
    return (
        <text
            x={x}
            y={y}
            fontSize={size}
            textLength={w}
            lengthAdjust="spacingAndGlyphs"
            fill={fill}
            stroke={fill}
            strokeWidth=".35"
            fontFamily='"Liberation Serif", serif'
        >
            {children}
        </text>
    );
}

function ScoreFlat({ x, y, s = 1 }: { x: number; y: number; s?: number }) {
    return (
        <g transform={`translate(${x} ${y}) scale(${s})`} fill="none" stroke="#111">
            <path d="M0 -18V7" strokeWidth="1" />
            <path d="M0 -3.4C3 -6.8 7.2 -6 6.4 -2C5.6 1.6 2.2 4.4 0 6.4" strokeWidth="1.8" />
        </g>
    );
}

function TimeSig({ x, y }: { x: number; y: number }) {
    return (
        <g fontFamily='"Liberation Serif", serif' fontWeight="700" fontSize="23.5" fill="#111" stroke="#111" strokeWidth=".5">
            <text x={x} y={y} textLength="13.4" lengthAdjust="spacingAndGlyphs">4</text>
            <text x={x} y={y + 19.4} textLength="13.4" lengthAdjust="spacingAndGlyphs">4</text>
        </g>
    );
}

function Score() {
    return (
        <svg width="982" height="360" viewBox="142 337 982 360" className="block">
            <Words x={580} y={353.6} w={105} size={40} fill="#cccccc">(Title)</Words>
            <Words x={593} y={382.7} w={80} size={20} fill="#c9c9c9">(Subtitle)</Words>
            <Words x={200.5} y={403.5} w={104} size={27} fill="#cfcfcf">(Lyricist)</Words>
            <Words x={931} y={403.5} w={134} size={27} fill="#cfcfcf">(Composer)</Words>
            <Words x={194} y={493} w={78} size={20.5}>Marimba</Words>
            <Words x={228.5} y={608.7} w={43.5} size={20.5}>Viola</Words>
            <Words x={379} y={437} w={143} size={20.5}>Fast as a cheetah</Words>

            {/* tempo mark */}
            <ellipse cx="355.6" cy="436" rx="2.6" ry="1.7" transform="rotate(-24 355.6 436)" fill="none" stroke="#222" strokeWidth="1.1" />
            <path d="M358.3 435V420" stroke="#444" strokeWidth=".9" />
            <text x="360" y="437" fontSize="14.5" textLength="28" lengthAdjust="spacingAndGlyphs" fill="#222" fontFamily='"Noto Sans", sans-serif'>=90</text>

            {/* chord names */}
            <g fontFamily='"Noto Sans", sans-serif' fontSize="20" fill="#111">
                <text x="688.4" y="446.5" textLength="12.6" lengthAdjust="spacingAndGlyphs">B</text>
                <text x="820.5" y="446.5" textLength="28" lengthAdjust="spacingAndGlyphs">Fm</text>
            </g>
            <ScoreFlat x={705} y={442} s={0.8} />

            {/* staves and barlines */}
            {[...trebleLines, ...altoLines].map((y) => (
                <path key={y} d={`M291 ${y}H1066`} stroke="#4a4a4a" strokeWidth="1" />
            ))}
            {[291.4, 538.4, 676.4, 808.6, 950].map((x) => (
                <path key={x} d={`M${x} 465.3V620`} stroke="#222" strokeWidth="1.4" />
            ))}
            <path d="M1060 465.3V620" stroke="#333" strokeWidth="1.2" />
            <path d="M1066.2 465.3V620" stroke="#000" strokeWidth="5.6" />

            {/* treble clef */}
            <g transform="translate(140 335) scale(.33333)">
                <path
                    fillRule="evenodd"
                    fill="#111"
                    d="M502 420C497 394 498 368 514 354C528 362 531 386 526 403C520 426 502 440 490 458C477 478 482 502 508 504C530 504 538 490 533 476C529 463 514 463 508 470C503 478 506 487 513 492C500 491 492 480 495 468C501 447 536 446 542 477C546 500 525 511 508 510C480 508 467 485 473 460C478 440 494 428 502 420ZM507 414C518 404 525 390 522 376C519 367 510 373 507 385C504 395 505 405 507 414Z"
                />
                <path d="M503 412L526 522C531 546 512 556 496 548" fill="none" stroke="#111" strokeWidth="5" />
                <circle cx="499" cy="537" r="11" fill="#111" />
            </g>

            {/* alto clef */}
            <path d="M299.5 581V620" stroke="#000" strokeWidth="5" />
            <path d="M304.4 581V620" stroke="#111" strokeWidth="1.4" />
            <g fill="#111">
                <path id="c" d="M305.5 600.5C309 598 310 595 310.6 592.6C311.6 597 318 599 318 590.6C318 583.4 314.6 582 311.6 583.2C315 586 312.6 589.8 310 589.4C306.6 588.6 306.8 581 314 580.8C320 580.8 323.8 585 323.6 590.4C323.2 597.6 316.6 600.4 311.4 597.6C310.6 599 310 599.6 309.4 600.5Z" />
                <use href="#c" transform="matrix(1 0 0 -1 0 1201)" />
            </g>

            <ScoreFlat x={328.6} y={484} />
            <ScoreFlat x={331} y={604} />
            <TimeSig x={352.2} y={484.3} />
            <TimeSig x={352.6} y={599.5} />

            {/* notes */}
            {notes.map(([x, y, sx, sy, kind]) => (
                <g key={`${x}-${y}`}>
                    <ellipse cx={x} cy={y} rx="6.4" ry="4.4" transform={`rotate(-26 ${x} ${y})`} fill="#000" />
                    {kind === 'half' && <ellipse cx={x} cy={y} rx="5" ry="2" transform={`rotate(-32 ${x} ${y})`} fill="#fff" />}
                    <path d={`M${sx} ${y}V${sy}`} stroke="#000" strokeWidth={kind === 'thin' ? 0.9 : 1.5} />
                </g>
            ))}
            <path d="M422 465.8L445.7 468.8V473L422 470.2Z" />
            <path d="M562 471H603.7V475.2H562Z" />
            <circle cx="628" cy="489.7" r="1.8" />
            <circle cx="979.7" cy="489.7" r="1.8" />
            <path d="M773.3 514H791.5" stroke="#222" />

            {wholes.map(([x, y]) => (
                <g key={x}>
                    <ellipse cx={x} cy={y} rx="7.8" ry="4.8" fill="#000" />
                    <ellipse cx={x} cy={y} rx="2.7" ry="3.9" transform={`rotate(-22 ${x} ${y})`} fill="#fff" />
                </g>
            ))}

            {/* triplets */}
            <path d="M456.3 456V451.4H479.3M500.3 451.4H523.3V456" fill="none" stroke="#333" />
            <g fontFamily='"Liberation Serif", serif' fontSize="17" fontWeight="700" fontStyle="italic" fill="#111" textAnchor="middle">
                <text x="488.6" y="457.6">3</text>
                <text x="583" y="462.4">3</text>
            </g>

            {/* slur */}
            <path d="M388.5 593C400 576.5 545 576 557.5 593C543 578 404 578.4 388.5 593Z" fill="#111" stroke="#111" strokeWidth=".6" />

            {/* pen flecks */}
            <path d="M432 527H436M448 527H450M448.6 541.5H450M700 559H704M654.6 590V592M687 592V597" stroke="#f3f54a" strokeWidth="1.4" />

            {/* pointer */}
            <circle cx="386.2" cy="597" r="34.2" fill="none" stroke="#f4f62c" strokeWidth="3.2" />
            <path d="M385.8 596.5V612L389.4 608.8L392 614.6L394.8 613.4L392.2 607.8H397Z" fill="#fff" stroke="#111" strokeWidth="1" />
        </svg>
    );
}

function Scrollbar() {
    return (
        <div className="flex w-3 shrink-0 flex-col items-center bg-[#e8e8e8]">
            <svg width="12" height="34" viewBox="0 0 12 34">
                <path d="M3.2 9L6 5.6L8.8 9" fill="none" stroke="#777" strokeWidth="1.1" />
            </svg>
            <div className="h-[93px] w-full bg-[#bdbdbd]" />
            <svg width="12" height="12" viewBox="0 0 12 12" className="mt-auto">
                <path d="M3.2 6L6 9.2L8.8 6" fill="none" stroke="#777" strokeWidth="1.1" />
            </svg>
        </div>
    );
}

function Watermark() {
    return (
        <svg width="240" height="60" viewBox="0 660 240 60" className="absolute bottom-0 left-0 [filter:drop-shadow(1px_1px_1px_rgba(0,0,0,0.9))]">
            <g fontFamily='"Open Sans", "Noto Sans", sans-serif' fontWeight="700" fill="#fff" stroke="#fff" strokeWidth=".3">
                <text x="16.5" y="672.7" fontSize="12" textLength="95.5" lengthAdjust="spacingAndGlyphs">RECORDED WITH</text>
                <text x="16.5" y="697.6" fontSize="17.5" textLength="116.5" lengthAdjust="spacingAndGlyphs">SCREENCAST</text>
                <text x="175.5" y="697.6" fontSize="17.5" textLength="57.5" lengthAdjust="spacingAndGlyphs">MATIC</text>
            </g>
            <circle cx="154.6" cy="691.5" r="15.2" fill="none" stroke="#5597c8" strokeWidth="3.2" />
            <path d="M141.8 697A14 14 0 0 1 142.6 685A13.6 13.6 0 0 1 166.6 685A14 14 0 0 1 167.4 697Z" fill="#fff" />
            <circle cx="154.6" cy="691.5" r="6.2" fill="#4a9bdc" />
        </svg>
    );
}

export default function App() {
    return (
        <div className='relative flex h-[720px] w-[1280px] flex-col overflow-hidden bg-black py-[22px] font-["Liberation_Sans",sans-serif]'>
            <Header />
            <Toolbar />
            <main className="flex h-[360px] shrink-0 bg-[#d0d1c2]">
                <div className="ml-[142px] w-[982px] shrink-0 bg-white shadow-[0_0_6px_rgba(120,110,90,0.35)]">
                    <Score />
                </div>
                <div className="flex-1" />
                <Scrollbar />
            </main>
            <Watermark />
        </div>
    );
}
